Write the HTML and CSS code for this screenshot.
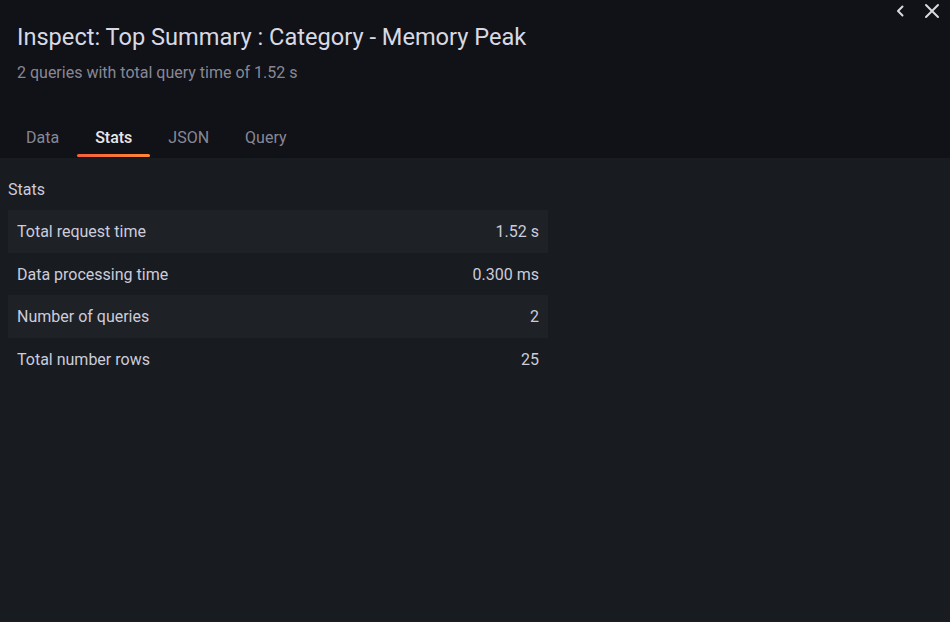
FILE: index.html
```html
<!DOCTYPE html>
<html>
<head>
<meta charset="utf-8">
<link rel="stylesheet" href="styles.css">
</head>
<body>
<div class="drawer">
  <header class="header">
    <div class="actions">
      <button class="icon-btn" aria-label="Collapse">
        <svg width="16" height="16" viewBox="0 0 16 16"><path d="M10.5 3.5 L6 8 L10.5 12.5" fill="none" stroke="#d8d9e2" stroke-width="2" stroke-linecap="round" stroke-linejoin="round"/></svg>
      </button>
      <button class="icon-btn" aria-label="Close">
        <svg width="16" height="16" viewBox="0 0 16 16"><path d="M2 2 L14 14 M14 2 L2 14" fill="none" stroke="#d8d9e2" stroke-width="2" stroke-linecap="round"/></svg>
      </button>
    </div>
    <h1 class="title">Inspect: Top Summary : Category - Memory Peak</h1>
    <div class="subtitle">2 queries with total query time of 1.52 s</div>
    <nav class="tabs">
      <div class="tab">Data</div>
      <div class="tab active">Stats</div>
      <div class="tab">JSON</div>
      <div class="tab">Query</div>
    </nav>
  </header>
  <main class="content">
    <div class="section-title">Stats</div>
    <table class="stats">
      <tr><td>Total request time</td><td class="val">1.52 s</td></tr>
      <tr><td>Data processing time</td><td class="val">0.300 ms</td></tr>
      <tr><td>Number of queries</td><td class="val">2</td></tr>
      <tr><td>Total number rows</td><td class="val">25</td></tr>
    </table>
  </main>
</div>
</body>
</html>
```

FILE: styles.css
```css
* { box-sizing: border-box; }
html, body {
  margin: 0;
  padding: 0;
  height: 100%;
  background: #181b1f;
  font-family: Roboto, "Liberation Sans", sans-serif;
  color: #ccccdc;
}
.drawer {
  display: flex;
  flex-direction: column;
  height: 100%;
}
.header {
  position: relative;
  background: #111217;
  padding: 23px 0 0 0;
}
.actions {
  position: absolute;
  top: 3px;
  right: 10px;
  display: flex;
  gap: 16px;
}
.icon-btn {
  background: none;
  border: 0;
  padding: 0;
  width: 16px;
  height: 16px;
  display: flex;
  align-items: center;
  justify-content: center;
}
.title {
  margin: 0 0 0 17px;
  font-size: 23.6px;
  font-weight: 400;
  line-height: 28px;
  color: #d8d9e2;
}
.subtitle {
  margin: 12px 0 0 17px;
  font-size: 16px;
  line-height: 20px;
  color: rgba(204, 204, 220, 0.65);
}
.tabs {
  display: flex;
  padding-left: 8px;
  margin-top: 35px;
}
.tab {
  position: relative;
  padding: 0 18px;
  height: 40px;
  line-height: 40px;
  font-size: 16px;
  color: rgba(204, 204, 220, 0.65);
}
.tab.active {
  color: #e6e6ee;
  font-weight: 500;
}
.tab.active::after {
  content: "";
  position: absolute;
  left: 0;
  right: 0;
  bottom: 1px;
  height: 3px;
  border-radius: 2px;
  background: linear-gradient(90deg, #f55f3e, #ff8833);
}
.content {
  flex: 1;
  padding: 21px 8px;
}
.section-title {
  font-size: 16px;
  line-height: 22px;
  margin-bottom: 9px;
  color: #ccccdc;
}
.stats {
  width: 540px;
  border-collapse: collapse;
  font-size: 16px;
}
.stats td {
  height: 42.7px;
  padding: 0 9px;
  color: #ccccdc;
}
.stats tr:nth-child(odd) td {
  background: #1e2125;
}
.stats .val {
  text-align: right;
}
```
